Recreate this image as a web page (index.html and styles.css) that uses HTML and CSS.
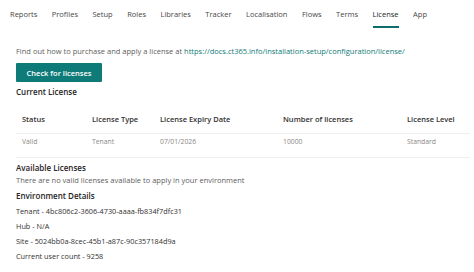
FILE: index.html
```html
<!DOCTYPE html>
<html>
<head>
	<meta http-equiv="Content-Type" content="text/html;charset=UTF-8">
	<title>License</title>
	<link rel="stylesheet" href="styles.css">
</head>
<body>
	<div class="nav">
		<a href="#">Reports</a>
		<a href="#">Profiles</a>
		<a href="#">Setup</a>
		<a href="#">Roles</a>
		<a href="#">Libraries</a>
		<a href="#">Tracker</a>
		<a href="#">Localisation</a>
		<a href="#">Flows</a>
		<a href="#">Terms</a>
		<a href="#" class="cur">License</a>
		<a href="#">App</a>
	</div>
	<div class="content">
		<p class="intro">Find out how to purchase and apply a license at <a href="#">https://docs.ct365.info/installation-setup/configuration/license/</a></p>
		<button class="btn">Check for licenses</button>
		<h3>Current License</h3>
		<div class="table">
			<div class="row head">
				<div class="c1">Status</div>
				<div class="c2">License Type</div>
				<div class="c3">License Expiry Date</div>
				<div class="c4">Number of licenses</div>
				<div class="c5">License Level</div>
			</div>
			<div class="row">
				<div class="c1">Valid</div>
				<div class="c2">Tenant</div>
				<div class="c3">07/01/2026</div>
				<div class="c4">10000</div>
				<div class="c5">Standard</div>
			</div>
		</div>
		<h3 class="avail">Available Licenses</h3>
		<p class="note">There are no valid licenses available to apply in your environment</p>
		<h3 class="env">Environment Details</h3>
		<ul class="details">
			<li>Tenant - 4bc806c2-3606-4730-aaaa-fb834f7dfc31</li>
			<li>Hub - N/A</li>
			<li>Site - 5024bb0a-8cec-45b1-a87c-90c357184d9a</li>
			<li>Current user count - 9258</li>
		</ul>
	</div>
</body>
</html>
```
FILE: styles.css
```css
*{
	margin: 0;
	padding: 0;
}
body{
	font-family: "Open Sans", "Noto Sans", sans-serif;
	font-size: 7.5px;
	color: #323130;
	background: #fff;
	width: 474px;
	overflow: hidden;
}
.nav{
	display: flex;
	gap: 14.5px;
	padding: 8px 0 0 10px;
	height: 22px;
}
.nav a{
	color: #484644;
	text-decoration: none;
	font-size: 7.5px;
	line-height: 12px;
	height: 20px;
	box-sizing: border-box;
}
.nav a.cur{
	color: #201f1e;
	border-bottom: 2px solid #0f6c6c;
}
.content{
	padding: 16px 0 0 16px;
}
.intro{
	color: #605e5c;
	line-height: 10px;
}
.intro a{
	color: #0f7a76;
	text-decoration: none;
}
.btn{
	display: block;
	margin-top: 7px;
	width: 86px;
	height: 19px;
	border: none;
	border-radius: 1px;
	background: #0f7b78;
	color: #fff;
	font-family: inherit;
	font-size: 7.5px;
	font-weight: 600;
}
h3{
	font-size: 8px;
	font-weight: 600;
	color: #252423;
	line-height: 11px;
	margin-top: 4px;
}
.table{
	margin-top: 8px;
	width: 454px;
}
.row{
	display: flex;
	height: 24px;
	align-items: flex-start;
	padding-top: 3px;
	box-sizing: border-box;
	border-bottom: 1px solid #f0efee;
	color: #8a8886;
	font-size: 6.8px;
}
.row.head{
	height: 29px;
	align-items: center;
	padding-top: 0;
	color: #323130;
	font-size: 7.5px;
	font-weight: 600;
}
.c1{ width: 70px; padding-left: 6px; }
.c2{ width: 68px; }
.c3{ width: 123px; }
.c4{ width: 124px; }
.c5{ flex: 1; }
.avail{
	margin-top: 4px;
}
.note{
	color: #605e5c;
	line-height: 14px;
	font-size: 7.5px;
}
.env{
	margin-top: 3px;
}
.details{
	list-style: none;
	margin-top: 3px;
	font-size: 7.3px;
	color: #323130;
}
.details li{
	line-height: 15px;
}
```
